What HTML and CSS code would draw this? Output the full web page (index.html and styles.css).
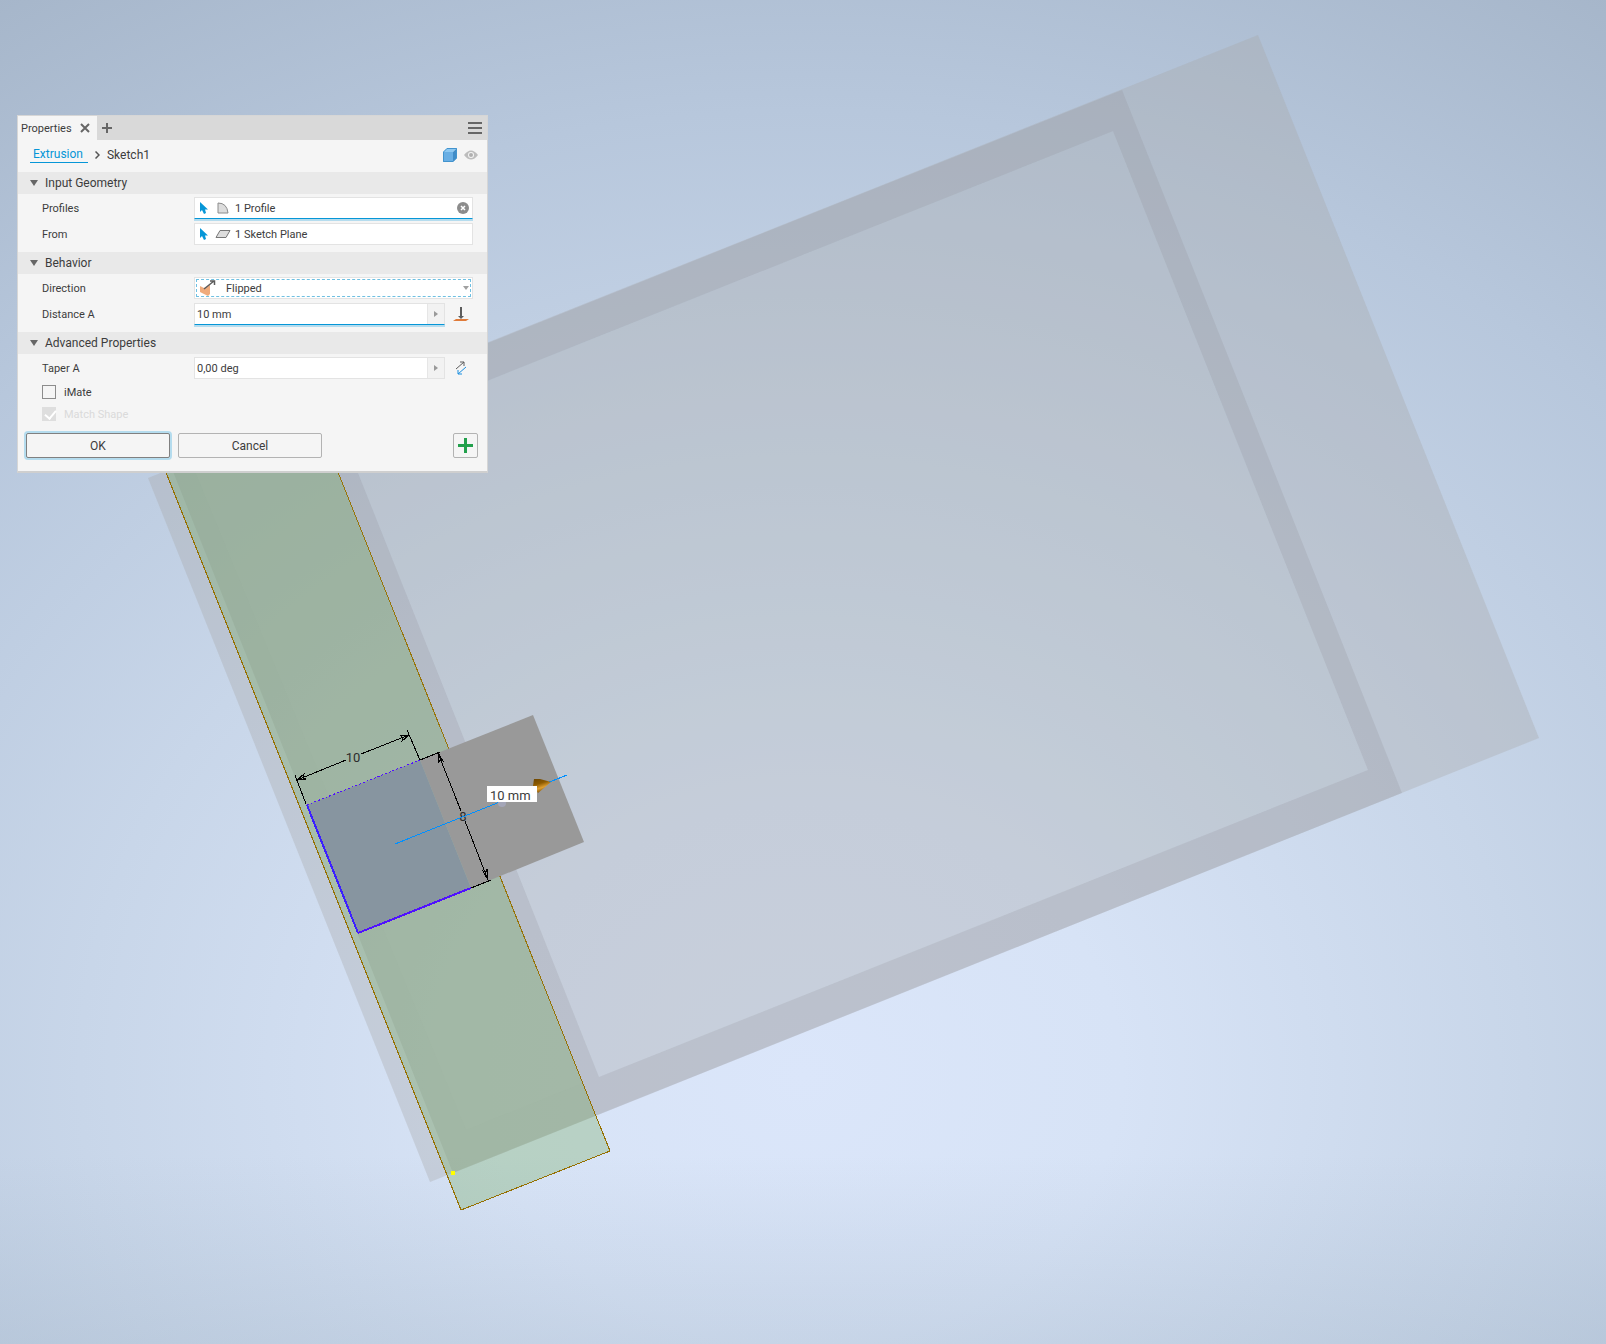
FILE: index.html
```
<!DOCTYPE html>
<html lang="en">
<head>
    <meta charset="UTF-8">
    <meta name="viewport" content="width=device-width, initial-scale=1.0">
    <title>Extrusion</title>
    <link rel="stylesheet" href="styles.css">
</head>
<body>
    <main class="viewport">
        <!-- 3D model -->
        <svg class="scene" viewBox="0 0 1606 1344" preserveAspectRatio="xMinYMin slice" aria-label="Model view">
            <defs>
                <linearGradient id="cone" x1="0" y1="0" x2="0.4" y2="1">
                    <stop offset="0" stop-color="#6e4600"/>
                    <stop offset="0.4" stop-color="#8c5a00"/>
                    <stop offset="0.7" stop-color="#e0a030"/>
                    <stop offset="1" stop-color="#7a4c00"/>
                </linearGradient>
            </defs>

            <!-- body -->
            <polygon class="body-outer" points="148,478 1258,35 1539,738 430,1182"/>
            <path class="body-wall" fill-rule="evenodd" d="M172 469 1122 90 1402 793 453 1173Z M344 438 1113 131 1368 770 599 1077Z"/>
            <polygon class="body-inner" points="344,438 1113,131 1368,770 599,1077"/>

            <!-- sketch plane -->
            <polygon class="plane" points="143,415 315,415 610,1151 461,1210"/>
            <polygon class="plane-inner" points="174,420 318,420 583,1083 466,1130"/>

            <!-- extrusion preview -->
            <polygon class="extrude" points="420,760 533,715 584,842 471,888"/>
            <polygon class="profile" points="307,805 420,760 471,888 358,933"/>
            <path class="edge edge-dotted" d="M307 805 420 760"/>
            <path class="edge edge-left" d="M307 805 358 933"/>
            <path class="edge edge-bottom" d="M358 933 471 888"/>

            <!-- dimensions -->
            <g class="dim">
                <path d="M295 775 306 804 M297 780 346 760 M361 754 409 735 M407 730 420 760 440 752"/>
                <path d="M438 753 461 811 M465 821 488 880 M471 888 491 880"/>
                <path d="M297 780 304 774 303 778 306 779Z M409 735 400 735 403 738 402 741Z"/>
                <path d="M438 753 438 763 440 760 443 761Z M488 880 483 871 486 872 487 869Z"/>
                <text x="353" y="762">10</text>
                <text x="463" y="821">8</text>
            </g>

            <!-- direction handle -->
            <path class="axis" d="M395 844 567 775"/>
            <circle cx="502" cy="803" r="4" fill="#a4a6b8"/>
            <path d="M534 779 540 779 551 782 538 793 533 786Z" fill="url(#cone)"/>
            <rect x="451" y="1171" width="4" height="4" fill="#ffff00"/>
        </svg>
        <input class="scene-value" type="text" value="10 mm" aria-label="Extrude distance">

        <!-- properties panel -->
        <form class="panel">
            <div class="tabs">
                <div class="tab">
                    <span>Properties</span>
                    <button type="button" class="icon-btn" aria-label="Close">
                        <svg width="10" height="10" viewBox="0 0 10 10"><path d="M1 1 9 9M9 1 1 9" stroke="#666" stroke-width="2"/></svg>
                    </button>
                </div>
                <button type="button" class="icon-btn tab-add" aria-label="Add tab">
                    <svg width="10" height="10" viewBox="0 0 10 10"><path d="M5 0V10M0 5H10" stroke="#666" stroke-width="2"/></svg>
                </button>
                <button type="button" class="icon-btn tab-menu" aria-label="Menu">
                    <svg width="14" height="12" viewBox="0 0 14 12"><path d="M0 1H14M0 6H14M0 11H14" stroke="#666" stroke-width="2"/></svg>
                </button>
            </div>

            <div class="crumbs">
                <a href="#">Extrusion</a>
                <svg width="5" height="8" viewBox="0 0 5 8"><path d="M0.500 0.500 4 4 0.500 7.500" fill="none" stroke="#555" stroke-width="1.500"/></svg>
                <span>Sketch1</span>
                <button type="button" class="icon-btn crumbs-solid" aria-label="Solid">
                    <svg width="14" height="14" viewBox="0 0 14 14">
                        <path d="M0 4H10V14H0Z" fill="#68aee4"/>
                        <path d="M0 4 4 0H14L10 4Z" fill="#8cc8f2"/>
                        <path d="M10 4 14 0V10L10 14Z" fill="#3f8cc8"/>
                        <path d="M0.500 4V13.500H10L13.500 10V0.500H4Z" fill="none" stroke="#4293cd"/>
                    </svg>
                </button>
                <button type="button" class="icon-btn" aria-label="Visibility">
                    <svg width="14" height="10" viewBox="0 0 14 10">
                        <path d="M0 5Q7-4 14 5Q7 14 0 5Z" fill="#bdbdbd"/>
                        <circle cx="7" cy="5" r="3" fill="#f5f5f5"/>
                        <circle cx="7" cy="5" r="2" fill="#b0b0b0"/>
                    </svg>
                </button>
            </div>

            <h2 class="section">Input Geometry</h2>
            <div class="rows">
                <div class="row">
                    <span class="label">Profiles</span>
                    <div class="field field-wide active">
                        <svg width="8" height="12" viewBox="0 0 8 12"><path d="M0 0V10L2 8 4 12 6 11 5 7.500H8Z" fill="#0696d7"/></svg>
                        <svg class="kind" width="12" height="12" viewBox="0 0 12 12"><path d="M1 1Q10 1 11 11H1Z" fill="#ddd" stroke="#8c8c8c"/></svg>
                        <span>1 Profile</span>
                        <button type="button" class="icon-btn clear" aria-label="Clear">
                            <svg width="12" height="12" viewBox="0 0 12 12"><circle cx="6" cy="6" r="6" fill="#8c8c8c"/><path d="M4 4 8 8M8 4 4 8" stroke="#fff" stroke-width="1.500"/></svg>
                        </button>
                    </div>
                </div>
                <div class="row">
                    <span class="label">From</span>
                    <div class="field field-wide">
                        <svg width="8" height="12" viewBox="0 0 8 12"><path d="M0 0V10L2 8 4 12 6 11 5 7.500H8Z" fill="#0696d7"/></svg>
                        <svg class="kind kind-plane" width="16" height="8" viewBox="0 0 16 8"><path d="M5 0.500H15L11 7.500H1Z" fill="#ddd" stroke="#777"/></svg>
                        <span>1 Sketch Plane</span>
                    </div>
                </div>
            </div>

            <h2 class="section">Behavior</h2>
            <div class="rows">
                <div class="row">
                    <label class="label" for="direction">Direction</label>
                    <div class="field field-wide field-select">
                        <svg width="16" height="16" viewBox="0 0 16 16">
                            <path d="M0 6 4 8 10 5V14L8 16 0 12Z" fill="#f0ab7c"/>
                            <path d="M4 9 14 1M10 1H14.500V5" fill="none" stroke="#5c5c5c" stroke-width="1.500"/>
                        </svg>
                        <select id="direction">
                            <option>Flipped</option>
                            <option>Default</option>
                        </select>
                        <svg width="6" height="4" viewBox="0 0 6 4"><path d="M0 0H6L3 4Z" fill="#a0a0a0"/></svg>
                    </div>
                </div>
                <div class="row">
                    <label class="label" for="distance">Distance A</label>
                    <div class="field active">
                        <input id="distance" type="text" value="10 mm">
                        <button type="button" class="more" aria-label="Distance options">
                            <svg width="4" height="6" viewBox="0 0 4 6"><path d="M0 0 4 3 0 6Z" fill="#999"/></svg>
                        </button>
                    </div>
                    <button type="button" class="icon-btn side" aria-label="To">
                        <svg width="16" height="14" viewBox="0 0 16 14"><path d="M3 12H16L13 14H0Z" fill="#e07b39"/><path d="M8 0V9" stroke="#5c5c5c" stroke-width="2"/><path d="M5 9H11L8 12Z" fill="#5c5c5c"/></svg>
                    </button>
                </div>
            </div>

            <h2 class="section">Advanced Properties</h2>
            <div class="rows rows-last">
                <div class="row">
                    <label class="label" for="taper">Taper A</label>
                    <div class="field">
                        <input id="taper" type="text" value="0,00 deg">
                        <button type="button" class="more" aria-label="Taper options">
                            <svg width="4" height="6" viewBox="0 0 4 6"><path d="M0 0 4 3 0 6Z" fill="#999"/></svg>
                        </button>
                    </div>
                    <button type="button" class="icon-btn side" aria-label="Flip taper">
                        <svg width="10" height="14" viewBox="0 0 10 14" fill="none"><path d="M0 8 8 1M4 1H8V5" stroke="#5c5c5c"/><path d="M10 6 2 13M2 9V13H6" stroke="#1a8fe0"/></svg>
                    </button>
                </div>
            </div>

            <label class="check"><input type="checkbox"> iMate</label>
            <label class="check"><input type="checkbox" checked disabled> Match Shape</label>

            <div class="buttons">
                <button type="button" class="btn btn-ok">OK</button>
                <button type="button" class="btn">Cancel</button>
                <button type="button" class="btn btn-add" aria-label="Apply and create new">
                    <svg width="15" height="15" viewBox="0 0 15 15"><path d="M7.500 0V15M0 7.500H15" stroke="#22a04c" stroke-width="3"/></svg>
                </button>
            </div>
        </form>
    </main>
</body>
</html>
```
FILE: styles.css
```
* {
    box-sizing: border-box;
}

body {
    margin: 0;
    font-family: Roboto, sans-serif;
    font-size: 11px;
    color: #3c3c3c;
}

button, input, select {
    font: inherit;
    color: inherit;
}

svg {
    display: block;
    flex: none;
}

.viewport {
    position: relative;
    min-height: 100vh;
    padding: 115px 17px;
    background:
        linear-gradient(rgba(160, 178, 196, 0) 86%, rgba(160, 178, 196, 0.3) 100%),
        radial-gradient(ellipse 90% 92% at 50% 80%, #dbe6fa 0%, #d7e3f6 22%, #c8d6e9 50%, #b7c7dc 78%, #a5b5c9 105%);
    overflow: hidden;
}

/* Scene */
.scene {
    position: absolute;
    top: 0;
    left: 0;
    width: 100%;
    height: 100%;
}

.body-outer {
    fill: #a6a6a8;
    fill-opacity: 0.34;
}

.body-wall {
    fill: #94929a;
    fill-opacity: 0.24;
}

.body-inner {
    fill: #b4c6cc;
    fill-opacity: 0.06;
}

.plane {
    fill: #66a044;
    fill-opacity: 0.28;
    stroke: #967000;
    shape-rendering: crispEdges;
}

.plane-inner {
    fill: #b4c8b4;
    fill-opacity: 0.06;
}

.extrude {
    fill: #999;
}

.profile {
    fill: #8795a0;
}

.edge {
    fill: none;
    stroke: #5010ff;
    stroke-width: 2;
    shape-rendering: crispEdges;
}

.edge-left {
    stroke: #3c20ff;
}

.edge-dotted {
    stroke-width: 1;
    stroke-dasharray: 2 2;
}

.dim path {
    fill: none;
    stroke: #000;
    shape-rendering: crispEdges;
}

.dim text {
    font-size: 13px;
    fill: #2c2c2c;
    text-anchor: middle;
}

.axis {
    stroke: #0090ff;
    shape-rendering: crispEdges;
}

.scene-value {
    position: absolute;
    top: 786px;
    left: 487px;
    width: 50px;
    height: 16px;
    padding: 2px 3px 0;
    border: 0;
    background: #fff;
    font-size: 13px;
}

/* Panel */
.panel {
    position: relative;
    width: 471px;
    border: 1px solid #d6d6d6;
    border-bottom: 2px solid #cfcfcf;
    background: #f5f5f5;
}

.icon-btn {
    display: flex;
    padding: 0;
    border: 0;
    background: none;
}

.tabs {
    display: flex;
    align-items: center;
    height: 24px;
    padding-right: 5px;
    background: #d9d9d9;
}

.tab {
    display: flex;
    align-items: center;
    justify-content: space-between;
    width: 79px;
    height: 24px;
    padding: 0 7px 0 3px;
    background: #f5f5f5;
}

.tab-add {
    margin-left: 5px;
}

.tab-menu {
    margin-left: auto;
}

.crumbs {
    display: flex;
    align-items: center;
    gap: 7px;
    height: 32px;
    padding: 0 9px 3px 12px;
    font-size: 12px;
}

.crumbs a {
    padding: 0 5px 0 3px;
    border-bottom: 1px solid #0696d7;
    color: #0696d7;
    line-height: 16px;
    text-decoration: none;
}

.crumbs-solid {
    margin-left: auto;
}

.section {
    display: flex;
    align-items: center;
    gap: 7px;
    height: 22px;
    margin: 0;
    padding-left: 12px;
    background: #e9e9e9;
    font-size: 12px;
    font-weight: normal;
}

.section::before {
    content: "";
    border: 4px solid transparent;
    border-top: 6px solid #666;
    border-bottom: 0;
}

.rows {
    display: flex;
    flex-direction: column;
    gap: 4px;
    padding: 3px 0 7px;
}

.rows-last {
    padding-bottom: 2px;
}

.row {
    display: flex;
    align-items: center;
    height: 22px;
    padding-left: 24px;
}

.label {
    width: 152px;
}

.field {
    display: flex;
    align-items: center;
    width: 251px;
    height: 22px;
    border: 1px solid #e3e3e3;
    background: #fff;
}

.field-wide {
    width: 279px;
    padding: 0 3px 0 5px;
}

.active {
    border-bottom: 1px solid #0696d7;
    box-shadow: 0 2px 0 #b5dcee;
}

.kind {
    margin: 0 6px 0 9px;
}

.kind-plane {
    margin: 0 4px 0 7px;
}

.clear {
    margin-left: auto;
}

.field-select {
    position: relative;
    outline: 1px dashed #6fc0e2;
    outline-offset: -3px;
}

.field-select select {
    flex: 1;
    padding: 0 0 0 10px;
    border: 0;
    outline: 0;
    background: none;
    appearance: none;
}

.field input {
    flex: 1;
    min-width: 0;
    height: 20px;
    padding: 0 2px;
    border: 0;
    background: none;
}

.more {
    display: flex;
    align-items: center;
    justify-content: center;
    width: 17px;
    height: 20px;
    padding: 0;
    border: 0;
    border-left: 1px solid #e6e6e6;
    background: #f2f2f2;
}

.side {
    justify-content: center;
    width: 16px;
    margin-left: 8px;
}

.check {
    display: flex;
    align-items: center;
    gap: 8px;
    height: 22px;
    padding-left: 24px;
}

.check input {
    width: 14px;
    height: 14px;
    margin: 0;
    border: 1px solid #8c8c8c;
    background: #f5f5f5;
    appearance: none;
}

.check:has(input:disabled) {
    color: #dadada;
}

.check input:disabled {
    border: 0;
    background: #dedede;
}

.check input:checked::before {
    content: "";
    display: block;
    width: 5px;
    height: 9px;
    margin: 1px 0 0 5px;
    border: solid #fff;
    border-width: 0 2px 2px 0;
    rotate: 40deg;
}

.buttons {
    display: flex;
    gap: 8px;
    padding: 8px 9px 13px 8px;
}

.btn {
    width: 144px;
    height: 25px;
    padding: 0;
    border: 1px solid #b3b3b3;
    border-radius: 2px;
    background: #f5f5f5;
    font-size: 12px;
}

.btn-ok {
    border-color: #808080;
    box-shadow: 0 0 0 2px #b5dcee;
}

.btn-add {
    display: flex;
    align-items: center;
    justify-content: center;
    width: 25px;
    margin-left: auto;
}
```
